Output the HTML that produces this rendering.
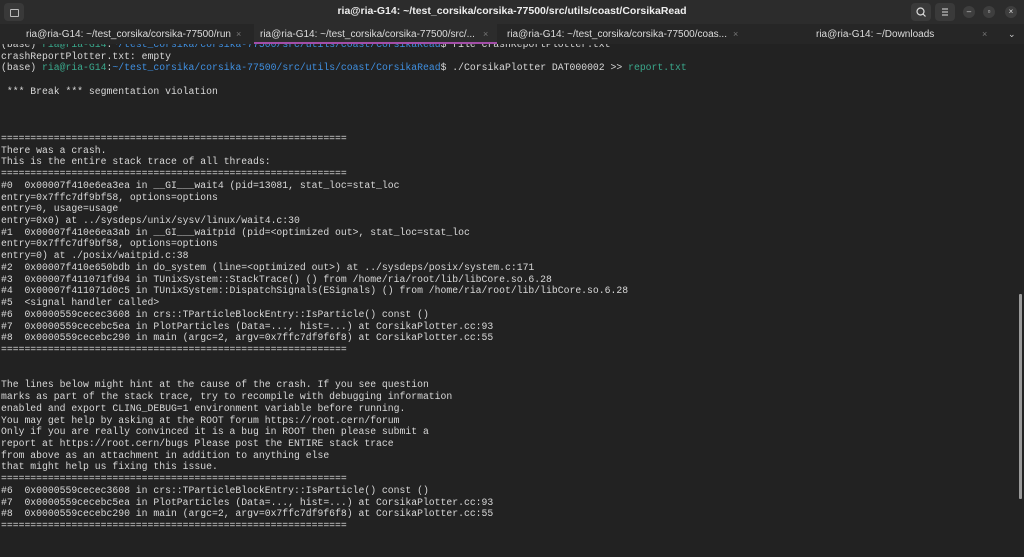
<!DOCTYPE html>
<html><head><meta charset="utf-8"><style>
html,body{margin:0;padding:0;width:1024px;height:557px;overflow:hidden;background:#222222;font-family:"Liberation Sans",sans-serif}
#title{position:absolute;left:0;top:0;width:1024px;height:24px;background:#2c2c2c;z-index:3}
#title .t{position:absolute;left:0;right:0;top:5px;text-align:center;color:#eee;font-weight:bold;font-size:10.5px}
#tabs{position:absolute;left:0;top:24px;width:1024px;height:20px;background:#262626;z-index:3}
.tab{position:absolute;top:0;height:20px;color:#ddd;font-size:10px;line-height:21px}
.x{position:absolute;top:0;color:#777;font-size:9px;line-height:21px}
#term{position:absolute;left:1px;top:39px;margin:0;font-family:"Liberation Mono",monospace;font-size:9.77px;line-height:11.74px;color:#d8d8d8;white-space:pre;z-index:1}
.g{color:#3aa88c}.b{color:#3f8fe0}
.btn{position:absolute;top:3px;width:20px;height:18px;border-radius:4px;background:#3a3a3a}
.c{position:absolute;top:6px;width:12px;height:12px;border-radius:6px;background:#3e3e3e;color:#ddd;font-size:8px;line-height:12px;text-align:center}
</style></head><body>
<div id="title">
<div style="position:absolute;left:4px;top:3px;width:20px;height:18px;border-radius:4px;background:#393939"></div>
<div style="position:absolute;left:10px;top:9px;width:7px;height:6px;border:1px solid #bbb;border-radius:1px"></div>
<div class="t">ria@ria-G14: ~/test_corsika/corsika-77500/src/utils/coast/CorsikaRead</div>
<div class="btn" style="left:911px"><svg width="20" height="18"><circle cx="9.5" cy="8.5" r="3.5" fill="none" stroke="#ddd" stroke-width="1.2"/><line x1="12" y1="11" x2="14.5" y2="13.5" stroke="#ddd" stroke-width="1.2"/></svg></div>
<div class="btn" style="left:935px"><svg width="20" height="18"><path d="M7 6h6M7 9h6M7 12h6" stroke="#ddd" stroke-width="1"/></svg></div>
<div class="c" style="left:963px">–</div>
<div class="c" style="left:983px">▫</div>
<div class="c" style="left:1005px">×</div>
</div>
<div id="tabs">
<div class="tab" style="left:26px">ria@ria-G14: ~/test_corsika/corsika-77500/run</div><div class="x" style="left:236px">×</div>
<div style="position:absolute;left:254px;top:0;width:243px;height:20px;background:#2c2c2c"></div>
<div class="tab" style="left:260px">ria@ria-G14: ~/test_corsika/corsika-77500/src/...</div><div class="x" style="left:483px">×</div>
<div style="position:absolute;left:254px;top:18px;width:243px;height:2px;background:#a34ea8"></div>
<div class="tab" style="left:507px">ria@ria-G14: ~/test_corsika/corsika-77500/coas...</div><div class="x" style="left:733px">×</div>
<div class="tab" style="left:816px">ria@ria-G14: ~/Downloads</div><div class="x" style="left:982px">×</div>
<div class="x" style="left:1008px;color:#ccc">⌄</div>
</div>
<pre id="term">(base) <span class="g">ria@ria-G14</span>:<span class="b">~/test_corsika/corsika-77500/src/utils/coast/CorsikaRead</span>$ file crashReportPlotter.txt
crashReportPlotter.txt: empty
(base) <span class="g">ria@ria-G14</span>:<span class="b">~/test_corsika/corsika-77500/src/utils/coast/CorsikaRead</span>$ ./CorsikaPlotter DAT000002 &gt;&gt; <span class="g">report.txt</span>

 *** Break *** segmentation violation



===========================================================
There was a crash.
This is the entire stack trace of all threads:
===========================================================
#0  0x00007f410e6ea3ea in __GI___wait4 (pid=13081, stat_loc=stat_loc
entry=0x7ffc7df9bf58, options=options
entry=0, usage=usage
entry=0x0) at ../sysdeps/unix/sysv/linux/wait4.c:30
#1  0x00007f410e6ea3ab in __GI___waitpid (pid=&lt;optimized out&gt;, stat_loc=stat_loc
entry=0x7ffc7df9bf58, options=options
entry=0) at ./posix/waitpid.c:38
#2  0x00007f410e650bdb in do_system (line=&lt;optimized out&gt;) at ../sysdeps/posix/system.c:171
#3  0x00007f411071fd94 in TUnixSystem::StackTrace() () from /home/ria/root/lib/libCore.so.6.28
#4  0x00007f411071d0c5 in TUnixSystem::DispatchSignals(ESignals) () from /home/ria/root/lib/libCore.so.6.28
#5  &lt;signal handler called&gt;
#6  0x0000559cecec3608 in crs::TParticleBlockEntry::IsParticle() const ()
#7  0x0000559cecebc5ea in PlotParticles (Data=..., hist=...) at CorsikaPlotter.cc:93
#8  0x0000559cecebc290 in main (argc=2, argv=0x7ffc7df9f6f8) at CorsikaPlotter.cc:55
===========================================================


The lines below might hint at the cause of the crash. If you see question
marks as part of the stack trace, try to recompile with debugging information
enabled and export CLING_DEBUG=1 environment variable before running.
You may get help by asking at the ROOT forum https://root.cern/forum
Only if you are really convinced it is a bug in ROOT then please submit a
report at https://root.cern/bugs Please post the ENTIRE stack trace
from above as an attachment in addition to anything else
that might help us fixing this issue.
===========================================================
#6  0x0000559cecec3608 in crs::TParticleBlockEntry::IsParticle() const ()
#7  0x0000559cecebc5ea in PlotParticles (Data=..., hist=...) at CorsikaPlotter.cc:93
#8  0x0000559cecebc290 in main (argc=2, argv=0x7ffc7df9f6f8) at CorsikaPlotter.cc:55
===========================================================</pre>
<div style="position:absolute;left:1019px;top:294px;width:3px;height:205px;background:#9a9a9a;border-radius:1px"></div>
</body></html>
